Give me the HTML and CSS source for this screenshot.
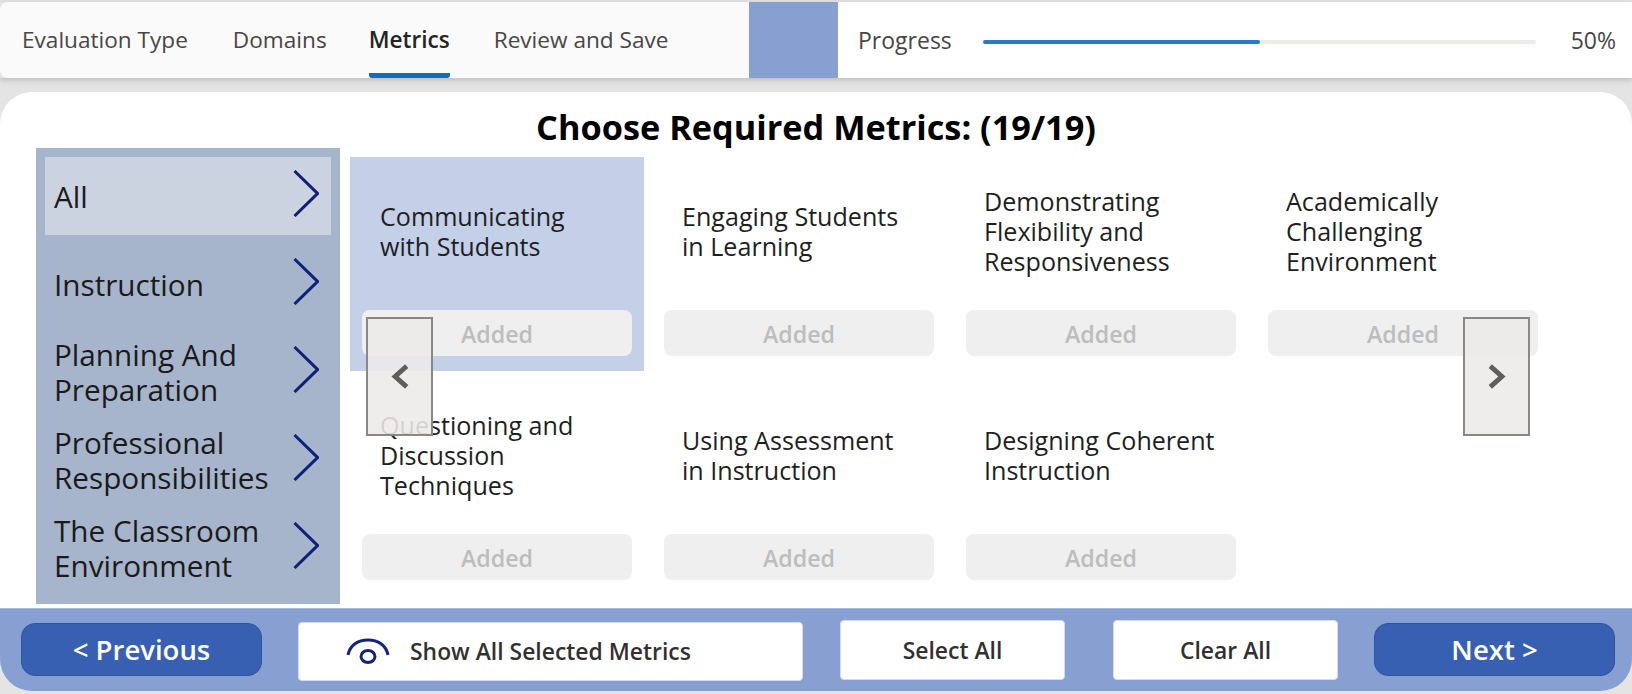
FILE: index.html
```html
<!DOCTYPE html>
<html lang="en">
<head>
<meta charset="utf-8">
<title>Choose Required Metrics</title>
<link rel="stylesheet" href="styles.css">
</head>
<body>
<header class="topbar">
  <nav class="tabs">
    <span class="tab">Evaluation Type</span>
    <span class="tab">Domains</span>
    <span class="tab active">Metrics</span>
    <span class="tab">Review and Save</span>
  </nav>
  <div class="spacer"></div>
  <div class="progress">
    <span class="progress-label">Progress</span>
    <div class="track"><div class="fill"></div></div>
    <span class="progress-value">50%</span>
  </div>
</header>
<main class="panel">
  <h1 class="title">Choose Required Metrics: (19/19)</h1>
  <div class="content">
    <aside class="sidebar">
      <div class="side-item selected"><span>All</span><svg class="chev" viewBox="0 0 26 47"><path d="M1.5 1 L24.5 23.5 L1.5 46"/></svg></div>
      <div class="side-item"><span>Instruction</span><svg class="chev" viewBox="0 0 26 47"><path d="M1.5 1 L24.5 23.5 L1.5 46"/></svg></div>
      <div class="side-item"><span>Planning And Preparation</span><svg class="chev" viewBox="0 0 26 47"><path d="M1.5 1 L24.5 23.5 L1.5 46"/></svg></div>
      <div class="side-item"><span>Professional Responsibilities</span><svg class="chev" viewBox="0 0 26 47"><path d="M1.5 1 L24.5 23.5 L1.5 46"/></svg></div>
      <div class="side-item"><span>The Classroom Environment</span><svg class="chev" viewBox="0 0 26 47"><path d="M1.5 1 L24.5 23.5 L1.5 46"/></svg></div>
    </aside>
    <section class="gallery">
      <article class="card selected"><p class="card-text">Communicating<br>with Students</p><div class="added">Added</div></article>
      <article class="card"><p class="card-text">Engaging Students<br>in Learning</p><div class="added">Added</div></article>
      <article class="card"><p class="card-text">Demonstrating<br>Flexibility and<br>Responsiveness</p><div class="added">Added</div></article>
      <article class="card"><p class="card-text">Academically<br>Challenging<br>Environment</p><div class="added">Added</div></article>
      <article class="card"><p class="card-text">Questioning and<br>Discussion<br>Techniques</p><div class="added">Added</div></article>
      <article class="card"><p class="card-text">Using Assessment<br>in Instruction</p><div class="added">Added</div></article>
      <article class="card"><p class="card-text">Designing Coherent<br>Instruction</p><div class="added">Added</div></article>
      <div class="nav-arrow prev"><svg viewBox="0 0 18 22"><path d="M14.5 2.5 L5 11 L14.5 19.5"/></svg></div>
      <div class="nav-arrow next"><svg viewBox="0 0 18 22"><path d="M3.5 2.5 L13 11 L3.5 19.5"/></svg></div>
    </section>
  </div>
</main>
<footer class="footer">
  <button class="btn primary btn-prev">&lt; Previous</button>
  <button class="btn light show-all">
    <svg class="eye" viewBox="0 0 44 27"><path d="M2 17 C4 7 12 2 22 2 C32 2 40 7 42 17"/><ellipse cx="22" cy="18.500" rx="7" ry="6"/></svg>
    <span>Show All Selected Metrics</span>
  </button>
  <button class="btn light select-all">Select All</button>
  <button class="btn light clear-all">Clear All</button>
  <button class="btn primary btn-next">Next &gt;</button>
</footer>
</body>
</html>
```
FILE: styles.css
```css
* { box-sizing: border-box; }
html, body { margin: 0; height: 694px; overflow: hidden; }
body {
  background: #e4e4e4;
  font-family: "Open Sans", "Liberation Sans", sans-serif;
  color: #1b1a19;
  padding-top: 2px;
}
.topbar {
  display: flex;
  height: 76px;
  box-shadow: 0 2px 6px rgba(0, 0, 0, .18);
}
.tabs {
  width: 749px;
  background: #fafafa;
  border-radius: 8px 0 0 8px;
  display: flex;
  gap: 45px;
  padding-left: 22px;
}
.tab {
  height: 76px;
  line-height: 76px;
  font-size: 22.600px;
  color: #484644;
  border-bottom: 6px solid transparent;
}
.tab.active {
  margin: 0 -1px 0 -3px;
  font-weight: 600;
  color: #252423;
  border-bottom: 5px solid #106ebe;
  border-radius: 0 0 3px 3px;
}
.spacer { width: 89px; background: #88a0d1; }
.progress {
  flex: 1;
  background: #fff;
  display: flex;
  align-items: center;
  padding: 0 16px 0 20px;
  font-size: 23px;
  color: #484644;
}
.progress-label { width: 125px; }
.track {
  width: 553px;
  height: 4px;
  margin-top: 3px;
  background: #edebe9;
  border-radius: 2px;
}
.fill { width: 50%; height: 4px; background: #2b78c5; border-radius: 2px; }
.progress-value { margin-left: auto; }

.panel {
  margin-top: 14px;
  height: 516px;
  background: #fff;
  border-radius: 32px 32px 0 0;
}
.title {
  margin: 0;
  height: 56px;
  padding-top: 12px;
  text-align: center;
  font-size: 34.300px;
  line-height: 45px;
  font-weight: 700;
  color: #000;
}
.content { display: flex; padding-left: 36px; gap: 10px; }
.sidebar {
  width: 304px;
  height: 456px;
  background: #a6b5cc;
  padding: 9px 9px 16px;
  display: flex;
  flex-direction: column;
  gap: 10px;
}
.side-item {
  height: 78px;
  padding-left: 9px;
  display: flex;
  align-items: center;
  justify-content: space-between;
  font-size: 29.700px;
  line-height: 35px;
  color: #1b1a19;
}
.side-item span { width: 226px; }
.side-item.selected { background: #cbd3e0; }
.chev { width: 26px; height: 47px; margin: 0 12px 5px 0; flex: none; }
.chev path { fill: none; stroke: #101f78; stroke-width: 3; }

.gallery {
  position: relative;
  padding-top: 9px;
  display: grid;
  grid-template-columns: repeat(4, 294px);
  grid-auto-rows: 214px;
  gap: 10px 8px;
  align-content: start;
}
.card { position: relative; padding: 0 12px; }
.card.selected { background: #c3d0e8; }
.card-text {
  margin: 0;
  height: 147px;
  padding-left: 18px;
  display: flex;
  flex-direction: column;
  justify-content: center;
  font-size: 25.100px;
  line-height: 30px;
  color: #201f1e;
}
.added {
  margin-top: 6px;
  height: 46px;
  width: 270px;
  background: #efefef;
  border-radius: 8px;
  text-align: center;
  font-size: 23.200px;
  line-height: 48px;
  font-weight: 600;
  color: #bdbdbd;
}
.nav-arrow {
  position: absolute;
  top: 169px;
  width: 67px;
  height: 119px;
  background: rgba(237, 235, 233, .88);
  border: 2px solid #8a8886;
  display: flex;
  align-items: center;
  justify-content: center;
}
.nav-arrow svg { width: 22px; height: 27px; }
.nav-arrow path { fill: none; stroke: #605e5c; stroke-width: 4; }
.nav-arrow.prev { left: 16px; }
.nav-arrow.next { left: 1113px; }

.footer {
  height: 83px;
  background: #88a0d1;
  border-radius: 0 0 32px 32px;
  border-top: 1px solid #a9bbdd;
  display: flex;
  align-items: center;
  padding: 2px 0 0 21px;
}
.btn {
  font-family: inherit;
  border: none;
  padding: 0;
  font-weight: 600;
}
.primary {
  width: 241px;
  height: 53px;
  background: #3760b2;
  border: 1px solid #2f559f;
  border-radius: 14px;
  color: #fff;
  font-size: 27.500px;
  margin-top: -4px;
}
.light {
  background: #fff;
  border: 1px solid #d4dbea;
  border-radius: 4px;
  color: #323130;
  font-size: 22.900px;
}
.show-all {
  width: 505px;
  height: 59px;
  margin-left: 36px;
  display: flex;
  align-items: center;
  padding: 1px 0 0 47px;
  gap: 20px;
}
.eye { width: 44px; height: 27px; }
.eye path, .eye ellipse { fill: none; stroke: #14247a; stroke-width: 3; }
.select-all, .clear-all {
  width: 225px;
  height: 60px;
  margin-top: -3px;
  padding-top: 2px;
}
.select-all { margin-left: 37px; }
.clear-all { margin-left: 48px; }
.btn-next { margin-left: 36px; }
```
